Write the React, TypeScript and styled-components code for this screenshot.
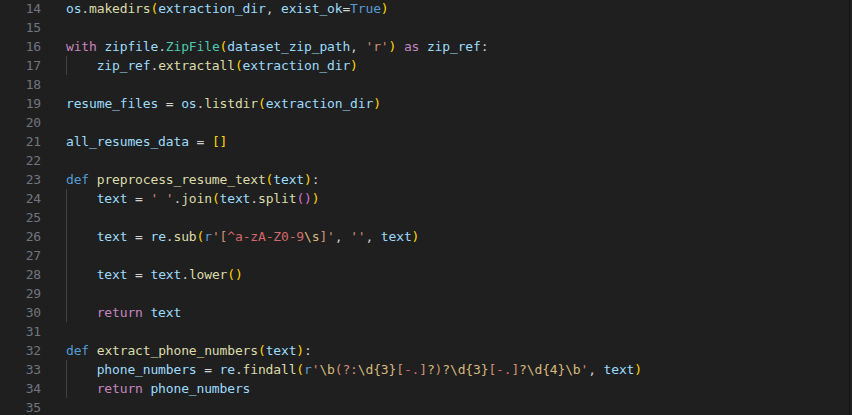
import React from "react";
import styled, { createGlobalStyle } from "styled-components";

const Global = createGlobalStyle`
  html, body { margin: 0; padding: 0; background: #1f1f1f; }
  body { overflow: hidden; }
`;

type Kind = "v" | "f" | "k" | "d" | "s" | "c" | "p" | "o" | "b1" | "b2" | "rx" | "esc";

const palette: Record<Kind, string> = {
  v: "#9cdcfe",
  f: "#dcdcaa",
  k: "#c586c0",
  d: "#569cd6",
  s: "#ce9178",
  c: "#4ec9b0",
  p: "#cccccc",
  o: "#d4d4d4",
  b1: "#ffd700",
  b2: "#da70d6",
  rx: "#d16969",
  esc: "#d7ba7d",
};

type Tok = [string, Kind];
type Line = { n: number; indent?: boolean; guide?: boolean; toks: Tok[] };

const lines: Line[] = [
  { n: 14, toks: [["os", "v"], [".", "p"], ["makedirs", "f"], ["(", "b1"], ["extraction_dir", "v"], [", ", "p"], ["exist_ok", "v"], ["=", "o"], ["True", "d"], [")", "b1"]] },
  { n: 15, toks: [] },
  { n: 16, toks: [["with", "k"], [" ", "p"], ["zipfile", "v"], [".", "p"], ["ZipFile", "c"], ["(", "b1"], ["dataset_zip_path", "v"], [", ", "p"], ["'r'", "s"], [")", "b1"], [" ", "p"], ["as", "k"], [" ", "p"], ["zip_ref", "v"], [":", "p"]] },
  { n: 17, indent: true, guide: true, toks: [["zip_ref", "v"], [".", "p"], ["extractall", "f"], ["(", "b1"], ["extraction_dir", "v"], [")", "b1"]] },
  { n: 18, toks: [] },
  { n: 19, toks: [["resume_files", "v"], [" ", "p"], ["=", "o"], [" ", "p"], ["os", "v"], [".", "p"], ["listdir", "f"], ["(", "b1"], ["extraction_dir", "v"], [")", "b1"]] },
  { n: 20, toks: [] },
  { n: 21, toks: [["all_resumes_data", "v"], [" ", "p"], ["=", "o"], [" ", "p"], ["[]", "b1"]] },
  { n: 22, toks: [] },
  { n: 23, toks: [["def", "d"], [" ", "p"], ["preprocess_resume_text", "f"], ["(", "b1"], ["text", "v"], [")", "b1"], [":", "p"]] },
  { n: 24, indent: true, guide: true, toks: [["text", "v"], [" ", "p"], ["=", "o"], [" ", "p"], ["' '", "s"], [".", "p"], ["join", "f"], ["(", "b1"], ["text", "v"], [".", "p"], ["split", "f"], ["()", "b2"], [")", "b1"]] },
  { n: 25, guide: true, toks: [] },
  { n: 26, indent: true, guide: true, toks: [["text", "v"], [" ", "p"], ["=", "o"], [" ", "p"], ["re", "v"], [".", "p"], ["sub", "f"], ["(", "b1"], ["r", "d"], ["'[", "s"], ["^a-zA-Z0-9", "rx"], ["\\s", "esc"], ["]'", "s"], [", ", "p"], ["''", "s"], [", ", "p"], ["text", "v"], [")", "b1"]] },
  { n: 27, guide: true, toks: [] },
  { n: 28, indent: true, guide: true, toks: [["text", "v"], [" ", "p"], ["=", "o"], [" ", "p"], ["text", "v"], [".", "p"], ["lower", "f"], ["()", "b1"]] },
  { n: 29, guide: true, toks: [] },
  { n: 30, indent: true, guide: true, toks: [["return", "k"], [" ", "p"], ["text", "v"]] },
  { n: 31, toks: [] },
  { n: 32, toks: [["def", "d"], [" ", "p"], ["extract_phone_numbers", "f"], ["(", "b1"], ["text", "v"], [")", "b1"], [":", "p"]] },
  { n: 33, indent: true, guide: true, toks: [["phone_numbers", "v"], [" ", "p"], ["=", "o"], [" ", "p"], ["re", "v"], [".", "p"], ["findall", "f"], ["(", "b1"], ["r", "d"], ["'", "s"], ["\\b", "esc"], ["(?:", "s"], ["\\d{3}", "esc"], ["[", "s"], ["-.", "rx"], ["]", "s"], ["?", "esc"], [")", "s"], ["?", "esc"], ["\\d{3}", "esc"], ["[", "s"], ["-.", "rx"], ["]", "s"], ["?", "esc"], ["\\d{4}\\b", "esc"], ["'", "s"], [", ", "p"], ["text", "v"], [")", "b1"]] },
  { n: 34, indent: true, guide: true, toks: [["return", "k"], [" ", "p"], ["phone_numbers", "v"]] },
  { n: 35, toks: [] },
];

const Editor = styled.div`
  display: flex;
  width: 852px;
  height: 415px;
  background: #1f1f1f;
  overflow: hidden;
`;

const Lines = styled.div`
  flex: 1;
  display: flex;
  flex-direction: column;
  margin-top: -1px;
  font-family: "DejaVu Sans Mono", "Liberation Mono", monospace;
  font-size: 13px;
  letter-spacing: -0.15px;
  line-height: 19px;
`;

const Row = styled.div`
  display: flex;
  height: 19px;
`;

const LineNo = styled.div`
  width: 41px;
  flex: none;
  text-align: right;
  color: #6e7681;
`;

const Code = styled.div<{ $guide?: boolean; $indent?: boolean }>`
  margin-left: 25px;
  flex: 1;
  white-space: pre;
  padding-left: ${(p) => (p.$indent ? "30.7px" : "0")};
  box-shadow: ${(p) => (p.$guide ? "inset 1px 0 0 #404040" : "none")};
`;

const Tk = styled.span<{ $k: Kind }>`
  color: ${(p) => palette[p.$k]};
`;

const ScrollEdge = styled.div`
  width: 3px;
  flex: none;
  background: #1f1f1f;
  box-shadow: inset 1px 0 0 #141414;
`;

export default function App() {
  return (
    <>
      <Global />
      <Editor>
        <Lines>
          {lines.map((l) => (
            <Row key={l.n}>
              <LineNo>{l.n}</LineNo>
              <Code $guide={l.guide} $indent={l.indent}>
                {l.toks.map(([t, k], i) => (
                  <Tk key={i} $k={k}>
                    {t}
                  </Tk>
                ))}
              </Code>
            </Row>
          ))}
        </Lines>
        <ScrollEdge />
      </Editor>
    </>
  );
}
